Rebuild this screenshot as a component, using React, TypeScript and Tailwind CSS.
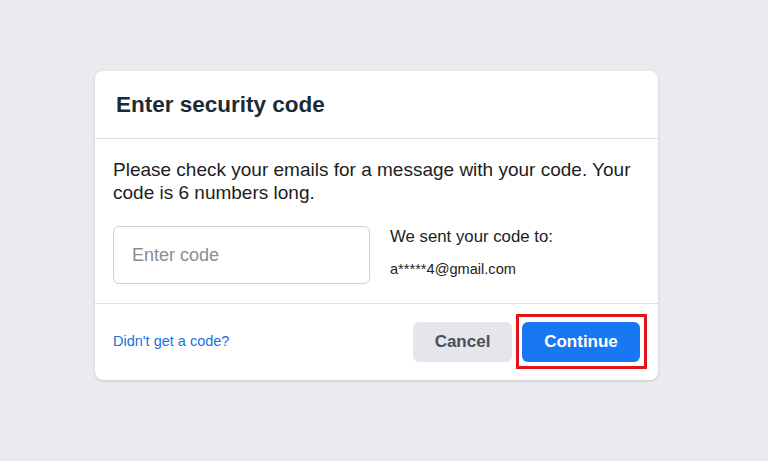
export default function App() {
  return (
    <div className="min-h-screen bg-[#e9ebee] pl-[95px] pt-[71px] font-['Liberation_Sans',Arial,sans-serif]">
      <div className="w-[563px] rounded-lg bg-white shadow-[0_1px_3px_rgba(0,0,0,0.15)]">
        <div className="flex h-[68px] items-center border-b border-[#dddfe2] px-[21px]">
          <h2 className="text-[22.5px] font-bold text-[#1c2b33]">Enter security code</h2>
        </div>

        <div className="px-[18px] pb-[19px] pt-[19px]">
          <p className="text-[19px] leading-[23px] text-[#1c1e21]">
            Please check your emails for a message with your code. Your code is 6 numbers long.
          </p>
          <div className="mt-[22px] flex gap-5">
            <input
              className="h-[58px] w-[257px] rounded-md border border-[#ccd0d5] px-[18px] text-[18px] text-[#1c1e21] outline-none placeholder:text-[#8a8d91]"
              placeholder="Enter code"
              type="text"
            />
            <div className="pt-[1px] text-[#1c1e21]">
              <p className="text-[16.8px] leading-[20px]">We sent your code to:</p>
              <p className="mt-[13px] text-[14.6px] leading-[18px]">a*****4@gmail.com</p>
            </div>
          </div>
        </div>

        <div className="flex h-[77px] items-center justify-between border-t border-[#dddfe2] px-[18px]">
          <a className="text-[14.5px] text-[#216fdb]" href="#">
            Didn't get a code?
          </a>
          <div className="flex gap-[10px]">
            <button className="h-10 w-[99px] rounded-md bg-[#e4e6eb] text-[17px] font-bold text-[#4b4f56]">
              Cancel
            </button>
            <div className="relative">
              <button className="h-10 w-[118px] rounded-md bg-[#1877f2] text-[17px] font-bold text-white">
                Continue
              </button>
              <div className="pointer-events-none absolute -bottom-[7px] -left-[6px] -right-[7px] -top-[8px] border-[3px] border-[#e0151b]" />
            </div>
          </div>
        </div>
      </div>
    </div>
  );
}
